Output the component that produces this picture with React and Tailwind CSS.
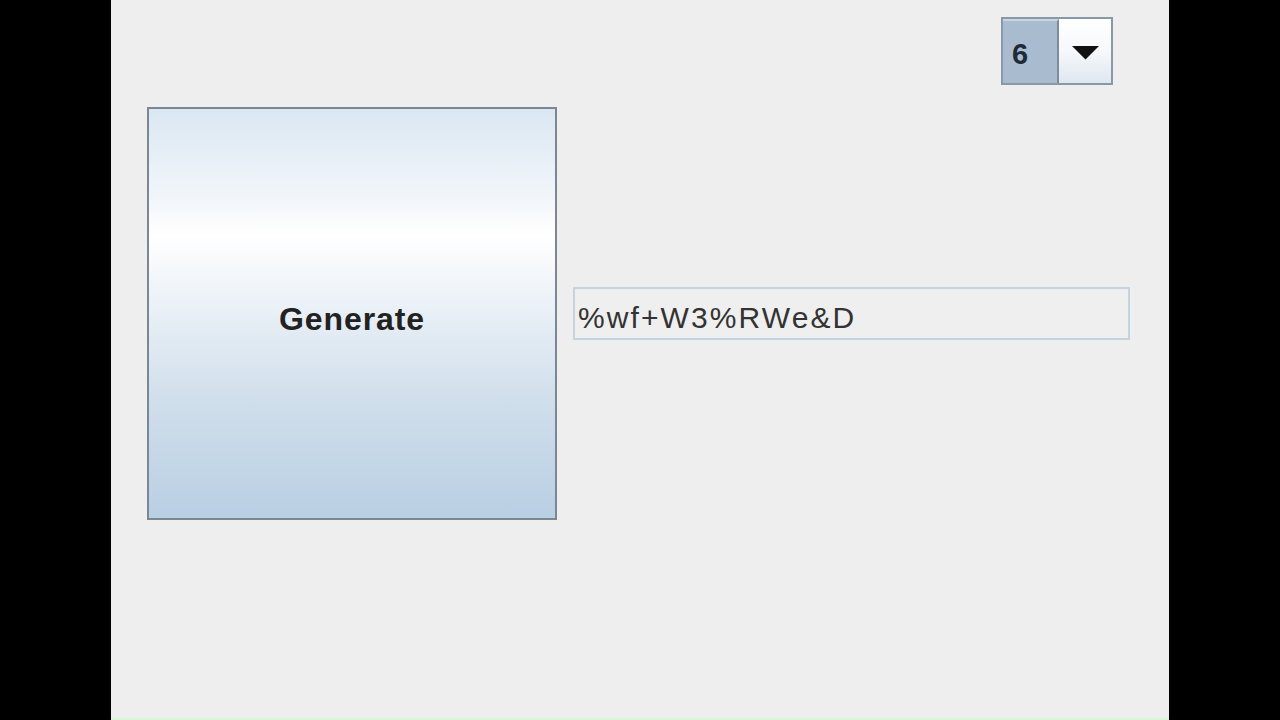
export default function App() {
    return (
        <div className="flex w-[1280px] h-[720px] bg-black" style={{fontFamily: '"Liberation Sans", Arial, sans-serif'}}>
            <div className="w-[111px] shrink-0 bg-black"/>
            <div className="flex flex-col w-[1058px] h-[720px] bg-[#eeeeee]">
                <div className="flex-1 flex flex-col">
                    {/*combo*/}
                    <div className="flex justify-end pt-[17px] pr-[56px]">
                        <div className="flex w-[112px] h-[68px] border-2 border-[#8a99a8] bg-white">
                            <div className="w-[56px] flex items-center pl-[9px] pt-[6px] bg-[#a9bccf] border-t-2 border-t-[#c9d6e2] border-r-2 border-r-[#7d8c9b] text-[29px] font-bold text-[#1f2a36]">
                                6
                            </div>
                            <div className="flex-1 flex items-center justify-center pt-[4px] bg-gradient-to-b from-[#ffffff] via-[#f6f8fb] to-[#dfe7ef]">
                                <svg width="27" height="14" viewBox="0 0 27 14">
                                    <polygon points="0,0 27,0 13.5,13.5" fill="#111"/>
                                </svg>
                            </div>
                        </div>
                    </div>
                    {/*body*/}
                    <div className="flex items-center mt-[22px] ml-[36px]">
                        <div
                            className="w-[410px] h-[413px] flex items-center justify-center pt-[10px] border-2 border-[#7b8894] text-[32px] tracking-[0.9px] font-bold text-[#222]"
                            style={{background: "linear-gradient(to bottom, #dae7f2 0%, #f2f6fa 22%, #ffffff 31%, #e8eff6 50%, #cfdeeb 72%, #b9cfe3 100%)"}}
                        >
                            Generate
                        </div>
                        <div className="ml-[16px] w-[557px] h-[53px] border-2 border-[#c4d3e0] bg-[#efefef] flex items-center pl-[3px] pt-[8px] text-[30px] tracking-[2.1px] text-[#333]">
                            %wf+W3%RWe&amp;D
                        </div>
                    </div>
                </div>
                <div className="h-[2px] bg-[#d4f7d4]"/>
            </div>
            <div className="flex-1 bg-black"/>
        </div>
    );
}
